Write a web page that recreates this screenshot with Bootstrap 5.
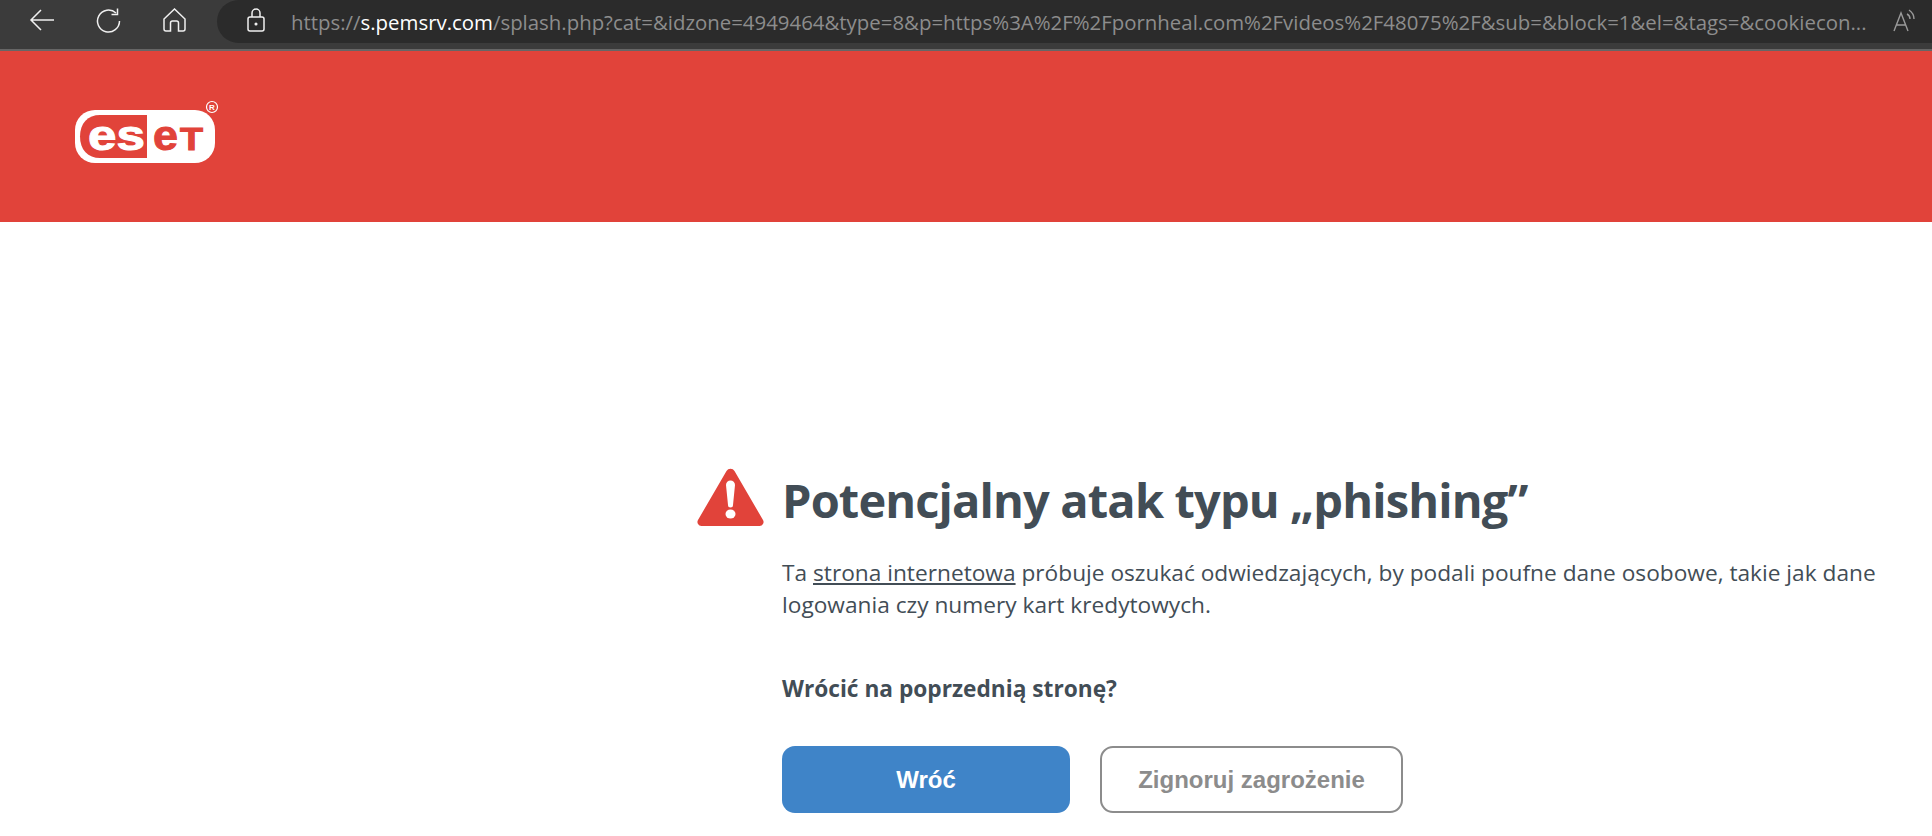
<!DOCTYPE html>
<html lang="pl">
<head>
  <meta charset="UTF-8" />
  <title>Potencjalny atak typu „phishing”</title>
  <link href="https://cdn.jsdelivr.net/npm/bootstrap@5.3.2/dist/css/bootstrap.min.css" rel="stylesheet">
  <script src="https://cdn.jsdelivr.net/npm/bootstrap@5.3.2/dist/js/bootstrap.bundle.min.js"></script>
  <style>
    html, body { height: 836px; overflow: hidden; background: #fff; }
    body { font-family: "Open Sans", "Noto Sans", sans-serif; color: #424d56; }

    .chrome-bar { height: 51px; background: #3b3b3b; border-bottom: 2px solid #666; padding: 0 0 9px 29px; }
    .chrome-btn { stroke: #f0f0f0; fill: none; stroke-width: 1.5; flex: none; }
    .btn-back { margin-right: 41px; }
    .btn-reload { margin-right: 42px; }
    .btn-home { margin-right: 31px; }
    .addr-pill { height: 43px; background: #2b2b2b; border-top-left-radius: 22px; border-bottom-left-radius: 22px; padding-left: 30px; margin-top: 3px; }
    .addr-lock { margin-bottom: 3px; }
    .addr-text { font-size: 20.4px; line-height: 28px; color: #8d8d8d; margin-left: 26px; width: 1580px; white-space: nowrap; overflow: hidden; }
    .addr-text b { color: #fff; font-weight: 400; }
    .read-aloud { margin-left: 22px; margin-bottom: 4px; flex: none; }

    .red-band { height: 171px; background: #e1433a; padding: 47px 0 0 75px; }

    .warn-wrap { padding: 246px 0 0 697px; }
    .warn-icon { width: 67px; height: 58px; flex: none; margin: 0 18px 6px 0; }
    .warn-title { font-size: 47px; line-height: 64px; font-weight: 700; letter-spacing: -.87px; color: #424d56; margin: 0; white-space: nowrap; }
    .warn-body { margin-left: 85px; }
    .warn-text { font-size: 22.7px; line-height: 32px; margin: 25px 0 0; white-space: nowrap; }
    .warn-text a { color: inherit; }
    .warn-question { font-size: 22.7px; line-height: 32px; font-weight: 700; margin: 52px 0 0; }
    .warn-actions { margin-top: 41px; gap: 30px; }
    .act-btn { height: 67px; border-radius: 13px; font: 700 24px/1 "Liberation Sans", Arial, sans-serif; }
    .act-back { width: 288px; background: #3f84c8; border: 0; color: #fff; }
    .act-back:hover { background: #3f84c8; color: #fff; }
    .act-ignore { width: 303px; background: #fff; border: 2px solid #8c8c8c; color: #8c8c8c; }
  </style>
</head>
<body>

<div class="chrome-bar d-flex align-items-center">
  <svg class="chrome-btn btn-back" width="26" height="24" viewBox="0 0 26 24"><path d="M25 12H2M12 2 2 12l10 10"/></svg>
  <svg class="chrome-btn btn-reload" width="25" height="25" viewBox="0 0 25 25"><path d="M20 5A11 11 0 1 0 23.500 13"/><path d="M21.500 .5v6h-6"/></svg>
  <svg class="chrome-btn btn-home" width="23" height="24" viewBox="0 0 23 24"><path d="M1 11 11.500 1 22 11v10a2 2 0 0 1-2 2h-4.500v-8a2 2 0 0 0-2-2h-4a2 2 0 0 0-2 2v8H3a2 2 0 0 1-2-2z"/></svg>
  <div class="addr-pill flex-grow-1 d-flex align-items-center">
    <svg class="chrome-btn addr-lock" width="18" height="24" viewBox="0 0 18 24"><rect x="1" y="9" width="16" height="14" rx="2"/><path d="M5 9V5a4 4 0 0 1 8 0v4"/><circle cx="9" cy="16" r=".8" fill="#f0f0f0"/></svg>
    <div class="addr-text">https://<b>s.pemsrv.com</b>/splash.php?cat=&amp;idzone=4949464&amp;type=8&amp;p=https%3A%2F%2Fpornheal.com%2Fvideos%2F48075%2F&amp;sub=&amp;block=1&amp;el=&amp;tags=&amp;cookiecon...</div>
    <svg class="read-aloud" width="24" height="24" viewBox="0 0 24 24" fill="none" stroke="#9a9a9a" stroke-width="1.4"><path d="M1 23 8 5l7 18M3.500 17h9"/><path d="M14 6c2 1 3 3 3 5M16 2c3 2 5 5 5 9"/></svg>
  </div>
</div>

<div class="red-band">
  <svg width="145" height="68" viewBox="0 -8 145 68">
    <rect x="0" y="4" width="140" height="53" rx="20" fill="#fff"/>
    <path d="M72 9H25C13 9 5 17 5 30.500S13 52 25 52h47z" fill="#e1433a"/>
    <g font-family="Liberation Sans, Arial, sans-serif" font-weight="700" stroke-width="1">
      <text x="13" y="44" font-size="43" fill="#fff" stroke="#fff" textLength="57" lengthAdjust="spacingAndGlyphs">es</text>
      <text x="78" y="44" font-size="43" fill="#e1433a" stroke="#e1433a" textLength="25" lengthAdjust="spacingAndGlyphs">e</text>
      <text x="105" y="44" font-size="32" fill="#e1433a" stroke="#e1433a" textLength="23" lengthAdjust="spacingAndGlyphs">T</text>
      <circle cx="137" cy="1" r="5.500" fill="none" stroke="#fff" stroke-width="1.200"/>
      <text x="137" y="4" text-anchor="middle" font-size="8" fill="#fff" stroke="none">R</text>
    </g>
  </svg>
</div>

<main class="warn-wrap">
  <div class="d-flex align-items-center">
    <svg class="warn-icon" viewBox="0 0 67 58">
      <path d="M29.500 3a4.600 4.600 0 0 1 8 0l28.500 49a4 4 0 0 1-3.500 6H4.500a4 4 0 0 1-3.500-6z" fill="#e1433a"/>
      <path d="M29 17a4.500 4.500 0 0 1 9 0l-2 20a2.500 2.500 0 0 1-5 0z" fill="#fff"/>
      <ellipse cx="33.500" cy="46" rx="5" ry="4.500" fill="#fff"/>
    </svg>
    <h1 class="warn-title">Potencjalny atak typu „phishing”</h1>
  </div>
  <div class="warn-body">
    <p class="warn-text">Ta <a href="#">strona internetowa</a> próbuje oszukać odwiedzających, by podali poufne dane osobowe, takie jak dane<br>logowania czy numery kart kredytowych.</p>
    <p class="warn-question">Wrócić na poprzednią stronę?</p>
    <div class="warn-actions d-flex">
      <button type="button" class="btn act-btn act-back">Wróć</button>
      <button type="button" class="btn act-btn act-ignore">Zignoruj zagrożenie</button>
    </div>
  </div>
</main>

</body>
</html>
